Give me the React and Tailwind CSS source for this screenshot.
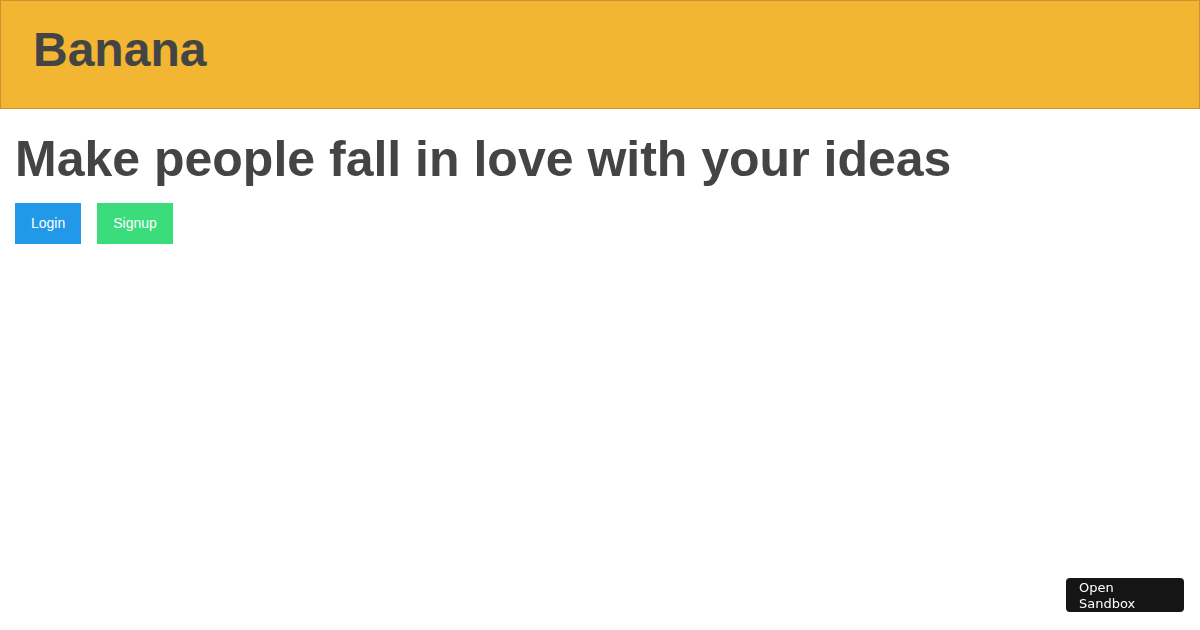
import React from 'react';

const App = () => {
  return (
    <div className="min-h-screen bg-white text-[#444] font-['Liberation_Sans',Arial,sans-serif]">
      <header className="h-[109px] bg-[#f2b632] border border-[#c8952a] px-8">
        <h1 className="pt-[21px] text-[48px] font-bold leading-[55px]">Banana</h1>
      </header>

      <main className="px-[15px]">
        <h2 className="mt-[22px] text-[50px] font-bold leading-[57px]">Make people fall in love with your ideas</h2>
        <div className="mt-[15px] flex gap-4">
          <button className="h-[41px] px-4 bg-[#2299e8] text-white text-[14px]">Login</button>
          <button className="h-[41px] px-4 bg-[#3bdc7b] text-white text-[14px]">Signup</button>
        </div>
      </main>

      {/* floating sandbox link */}
      <div className="fixed right-4 bottom-[18px] w-[118px] h-[34px] rounded bg-[#151515] pl-[13px] pt-[2px] text-white text-[13px] leading-[16px] font-['DejaVu_Sans',sans-serif]">
        <div>Open</div>
        <div>Sandbox</div>
      </div>
    </div>
  );
};

export default App;
